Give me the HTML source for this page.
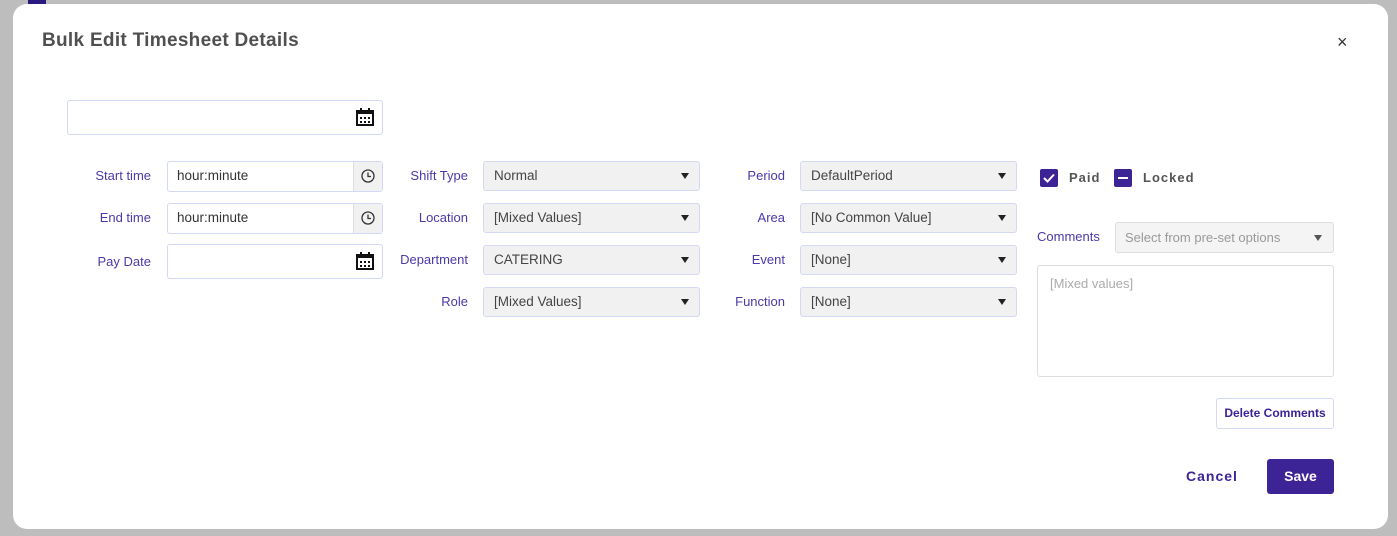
<!DOCTYPE html>
<html><head><style>
*{box-sizing:border-box;margin:0;padding:0}
body{width:1397px;height:536px;background:#bdbdbd;font-family:"Liberation Sans",sans-serif;position:relative;overflow:hidden}
.modal{position:absolute;left:13px;top:4px;width:1375px;height:525px;background:#fff;border-radius:14px}
.a{position:absolute}
h1{position:absolute;left:29px;top:26px;font-size:19px;font-weight:bold;color:#505050;letter-spacing:0.3px}
.lbl{position:absolute;font-size:13px;color:#4a3aa8;text-align:right;width:120px}
.inp{position:absolute;height:30px;border:1px solid #d4d8f5;border-radius:3px;background:#fff;font-size:13.5px;color:#333;padding:6px 9px}
.sel{position:absolute;height:30px;width:217px;border:1px solid #d4d8f5;border-radius:3px;background:#f1f1f1;font-size:13.5px;color:#444;padding:6px 10px}
.sel:after{content:"";position:absolute;right:10px;top:11px;border-left:4px solid transparent;border-right:4px solid transparent;border-top:6px solid #222}
.clk{position:absolute;right:0;top:0;width:29px;height:29px;background:#f1f1f1;border-left:1px solid #ddd}
.cb{position:absolute;width:18px;height:18px;background:#3d2496;border-radius:2px}
</style></head><body>
<div class="a" style="left:28px;top:0;width:18px;height:4px;background:#2a1a80"></div>
<div class="modal">
<h1>Bulk Edit Timesheet Details</h1>
<div class="a" style="left:1324px;top:28px;font-size:18px;color:#333">×</div>

<div class="inp" style="left:54px;top:96px;width:316px;height:35px"></div>
<svg class="a" style="left:342px;top:103px" width="20" height="20" viewBox="0 0 20 20"><rect x="2" y="4" width="16" height="14" fill="none" stroke="#111" stroke-width="2"/><rect x="2" y="4" width="16" height="3" fill="#111"/><rect x="5" y="1" width="2" height="4" fill="#111"/><rect x="13" y="1" width="2" height="4" fill="#111"/><g fill="#111"><rect x="5" y="10" width="2" height="2"/><rect x="9" y="10" width="2" height="2"/><rect x="13" y="10" width="2" height="2"/><rect x="5" y="14" width="2" height="2"/><rect x="9" y="14" width="2" height="2"/><rect x="13" y="14" width="2" height="2"/></g></svg>

<div class="lbl" style="left:18px;top:164px">Start time</div>
<div class="lbl" style="left:18px;top:206px">End time</div>
<div class="lbl" style="left:18px;top:250px">Pay Date</div>
<div class="inp" style="left:154px;top:157px;width:216px;height:31px">hour:minute<div class="clk"><svg style="position:absolute;left:7px;top:7px" width="14" height="14" viewBox="0 0 14 14"><circle cx="7" cy="7" r="6" fill="none" stroke="#333" stroke-width="1.3"/><path d="M7 3.5V7.5H10" fill="none" stroke="#333" stroke-width="1.3"/></svg></div></div>
<div class="inp" style="left:154px;top:199px;width:216px;height:31px">hour:minute<div class="clk"><svg style="position:absolute;left:7px;top:7px" width="14" height="14" viewBox="0 0 14 14"><circle cx="7" cy="7" r="6" fill="none" stroke="#333" stroke-width="1.3"/><path d="M7 3.5V7.5H10" fill="none" stroke="#333" stroke-width="1.3"/></svg></div></div>
<div class="inp" style="left:154px;top:240px;width:216px;height:35px"></div>
<svg class="a" style="left:342px;top:247px" width="20" height="20" viewBox="0 0 20 20"><rect x="2" y="4" width="16" height="14" fill="none" stroke="#111" stroke-width="2"/><rect x="2" y="4" width="16" height="3" fill="#111"/><rect x="5" y="1" width="2" height="4" fill="#111"/><rect x="13" y="1" width="2" height="4" fill="#111"/><g fill="#111"><rect x="5" y="10" width="2" height="2"/><rect x="9" y="10" width="2" height="2"/><rect x="13" y="10" width="2" height="2"/><rect x="5" y="14" width="2" height="2"/><rect x="9" y="14" width="2" height="2"/><rect x="13" y="14" width="2" height="2"/></g></svg>

<div class="lbl" style="left:335px;top:164px">Shift Type</div>
<div class="lbl" style="left:335px;top:206px">Location</div>
<div class="lbl" style="left:335px;top:248px">Department</div>
<div class="lbl" style="left:335px;top:290px">Role</div>
<div class="sel" style="left:470px;top:157px">Normal</div>
<div class="sel" style="left:470px;top:199px">[Mixed Values]</div>
<div class="sel" style="left:470px;top:241px">CATERING</div>
<div class="sel" style="left:470px;top:283px">[Mixed Values]</div>

<div class="lbl" style="left:652px;top:164px">Period</div>
<div class="lbl" style="left:652px;top:206px">Area</div>
<div class="lbl" style="left:652px;top:248px">Event</div>
<div class="lbl" style="left:652px;top:290px">Function</div>
<div class="sel" style="left:787px;top:157px">DefaultPeriod</div>
<div class="sel" style="left:787px;top:199px">[No Common Value]</div>
<div class="sel" style="left:787px;top:241px">[None]</div>
<div class="sel" style="left:787px;top:283px">[None]</div>

<div class="cb" style="left:1027px;top:165px"><svg width="18" height="18" viewBox="0 0 18 18"><path d="M4 9l3.5 3.5L14 5.5" fill="none" stroke="#fff" stroke-width="2"/></svg></div>
<div class="a" style="left:1056px;top:166px;font-size:13px;font-weight:bold;color:#555;letter-spacing:1px">Paid</div>
<div class="cb" style="left:1101px;top:165px"><div style="position:absolute;left:4px;top:8px;width:10px;height:2px;background:#fff"></div></div>
<div class="a" style="left:1130px;top:166px;font-size:13px;font-weight:bold;color:#555;letter-spacing:1px">Locked</div>

<div class="a" style="left:1024px;top:225px;font-size:13px;color:#4a3aa8">Comments</div>
<div class="a" style="left:1102px;top:218px;width:219px;height:31px;border:1px solid #ddd;border-radius:3px;background:#f4f4f4;font-size:13px;color:#999;padding:7px 9px">Select from pre-set options<span style="position:absolute;right:11px;top:12px;border-left:4px solid transparent;border-right:4px solid transparent;border-top:6px solid #555"></span></div>
<div class="a" style="left:1024px;top:261px;width:297px;height:112px;border:1px solid #ddd;border-radius:3px;font-size:13px;color:#aaa;padding:10px 12px">[Mixed values]</div>
<div class="a" style="left:1203px;top:394px;width:118px;height:31px;border:1px solid #d4d8f5;border-radius:3px;font-size:12px;font-weight:bold;color:#3d2496;text-align:center;line-height:29px">Delete Comments</div>
<div class="a" style="left:1173px;top:464px;font-size:14px;font-weight:bold;color:#3d2496;letter-spacing:1px">Cancel</div>
<div class="a" style="left:1254px;top:455px;width:67px;height:35px;background:#3d2496;border-radius:3px;color:#fff;font-size:14px;font-weight:bold;text-align:center;line-height:35px">Save</div>
</div>
</body></html>
